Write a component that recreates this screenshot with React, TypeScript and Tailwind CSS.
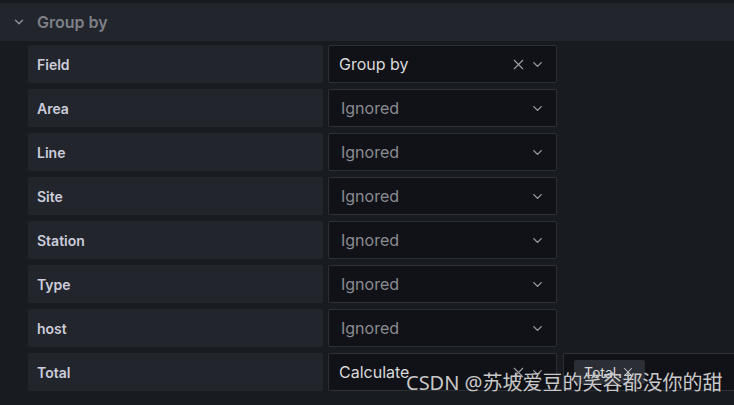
import { X, ChevronDown } from 'lucide-react';

const rows: { label: string; value: string; set?: boolean; extra?: boolean }[] = [
  { label: 'Field', value: 'Group by', set: true },
  { label: 'Area', value: 'Ignored' },
  { label: 'Line', value: 'Ignored' },
  { label: 'Site', value: 'Ignored' },
  { label: 'Station', value: 'Ignored' },
  { label: 'Type', value: 'Ignored' },
  { label: 'host', value: 'Ignored' },
  { label: 'Total', value: 'Calculate', set: true, extra: true },
];

export default function App() {
  return (
    <div
      className="relative w-[734px] h-[405px] overflow-hidden bg-[#181b1f] pt-[3px]"
      style={{ fontFamily: 'Inter, "Noto Sans", sans-serif' }}
    >
      {/* Section header */}
      <div className="h-[38px] bg-[#22252b] flex items-center pl-[12px]">
        <ChevronDown size={14} strokeWidth={2.5} className="text-[#8e9099]" />
        <span className="ml-[11px] text-[16px] font-semibold text-[#7e8088]">Group by</span>
      </div>

      <div className="flex flex-col gap-[6px] pl-[28px] mt-[4px]">
        {rows.map(r => (
          <div key={r.label} className="flex h-[38px] gap-[5px]">
            <div className="w-[295px] shrink-0 rounded-[2px] bg-[#22252b] flex items-center pl-[9px]">
              <span className="text-[14px] font-semibold text-[#ccccdc]">{r.label}</span>
            </div>
            <div className="w-[229px] shrink-0 rounded-[2px] border border-[#2c2f36] bg-[#111217] flex items-center pl-[10px] pr-[11px]">
              <span
                className={
                  r.set
                    ? 'flex-1 text-[16px] text-[#d8d9da]'
                    : 'flex-1 text-[16px] text-[#8a8b92] pl-[2px]'
                }
              >
                {r.value}
              </span>
              {r.set && <X size={17} strokeWidth={1.5} className="text-[#9fa1a8] mr-[3px]" />}
              <ChevronDown size={15} strokeWidth={2} className="text-[#9fa1a8]" />
            </div>
            {r.extra && (
              <div className="ml-[1px] w-[200px] shrink-0 rounded-[2px] border border-[#2c2f36] bg-[#111217] flex items-center pl-[10px]">
                <div className="flex items-center gap-[5px] h-[24px] rounded-[2px] bg-[#2b2e35] px-[10px]">
                  <span className="text-[14px] text-[#d8d9da]">Total</span>
                  <X size={14} strokeWidth={1.8} className="text-[#c8c9d0]" />
                </div>
              </div>
            )}
          </div>
        ))}
      </div>

      {/* Watermark */}
      <span
        className="absolute left-[406px] top-[369px] text-[20px] leading-[28px] text-[#c8c8c8] whitespace-nowrap"
        style={{ fontFamily: '"Noto Sans", "Noto Sans CJK SC", sans-serif' }}
      >
        CSDN @苏坡爱豆的笑容都没你的甜
      </span>
    </div>
  );
}
